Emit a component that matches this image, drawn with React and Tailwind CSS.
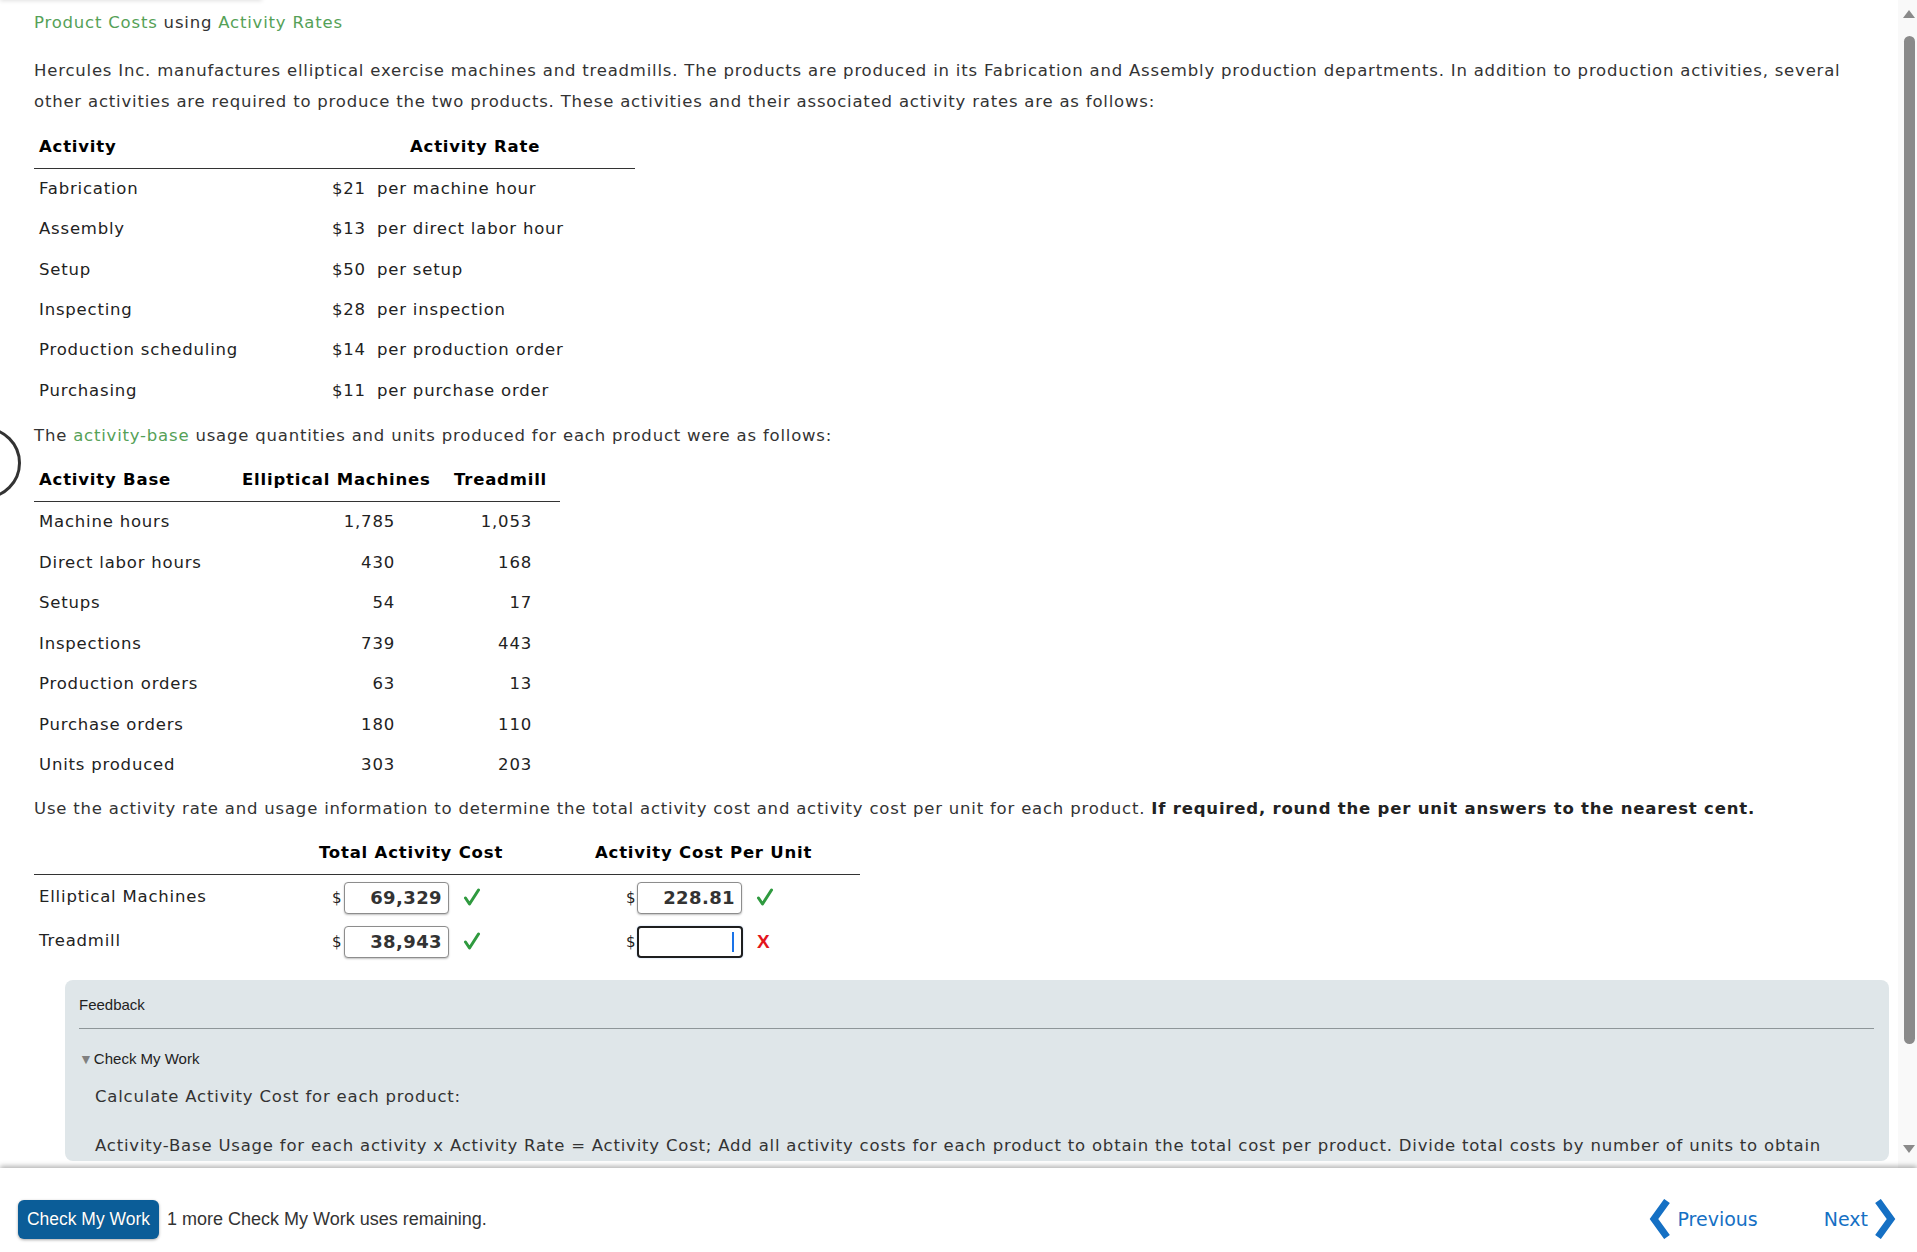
import React from "react";

const rates = [
  ["Fabrication", "$21", "per machine hour"],
  ["Assembly", "$13", "per direct labor hour"],
  ["Setup", "$50", "per setup"],
  ["Inspecting", "$28", "per inspection"],
  ["Production scheduling", "$14", "per production order"],
  ["Purchasing", "$11", "per purchase order"],
];

const usage = [
  ["Machine hours", "1,785", "1,053"],
  ["Direct labor hours", "430", "168"],
  ["Setups", "54", "17"],
  ["Inspections", "739", "443"],
  ["Production orders", "63", "13"],
  ["Purchase orders", "180", "110"],
  ["Units produced", "303", "203"],
];

function Check() {
  return (
    <svg width="18" height="19" viewBox="0 0 18 19" className="ml-[14px]">
      <path d="M2.5 10 L6.5 16 L15.5 2" fill="none" stroke="#2f9a3f" strokeWidth="3" strokeLinecap="round" strokeLinejoin="round" />
    </svg>
  );
}

function Cross() {
  return (
    <span className="ml-[14px] text-[19px] font-bold tracking-normal text-[#e4141c] [font-family:'Liberation_Sans',Arial,sans-serif]">X</span>
  );
}

function Filled({ value, dollar }) {
  return (
    <div className="flex items-center">
      <span className={`${dollar} text-[15px] tracking-normal text-[#222]`}>$</span>
      <div className="flex h-[32px] w-[105px] items-center justify-end rounded-[4px] border border-[#8d8d8d] bg-white pr-[6px] text-[18px] font-bold tracking-[0.4px] text-[#333] shadow-[0_1px_2px_rgba(0,0,0,0.25)]">
        {value}
      </div>
    </div>
  );
}

function Empty() {
  return (
    <div className="flex items-center">
      <span className="w-[11px] text-[15px] tracking-normal text-[#222]">$</span>
      <div className="flex h-[32px] w-[106px] items-center justify-end rounded-[4px] border-2 border-[#1e1e1e] bg-white pr-[7px] shadow-[0_0_2px_rgba(80,140,220,0.4)]">
        <div className="h-[20px] w-[2px] bg-[#1a73e8]" />
      </div>
    </div>
  );
}

export default function App() {
  return (
    <div className="flex h-[1252px] w-[1917px] flex-col overflow-hidden bg-white text-[16.5px] tracking-[0.8px] text-[#333] [font-family:'DejaVu_Sans',Verdana,sans-serif]">
      <div className="relative flex h-[1168px] min-h-0">
        {/* faint edge of an element above the viewport */}
        <div className="absolute left-0 top-[-6px] h-[6px] w-[262px] shadow-[0_1px_4px_rgba(0,0,0,0.12)]" />
        {/* circular control peeking from the left edge */}
        <div className="absolute left-[-51px] top-[427px] h-[72px] w-[72px] rounded-full border-[3px] border-[#333]" />

        <div className="min-w-0 flex-1 pl-[34px] pr-[9px]">
          <div className="flex h-[46px] items-center">
            <span className="text-[#55a157]">Product Costs</span>
            <span>&nbsp;using&nbsp;</span>
            <span className="text-[#55a157]">Activity Rates</span>
          </div>

          <p className="mt-[9px] pr-[10px] leading-[31px]">
            Hercules Inc. manufactures elliptical exercise machines and treadmills. The products are produced in its Fabrication and Assembly production departments. In addition to production activities, several other activities are required to produce the two products. These activities and their associated activity rates are as follows:
          </p>

          {/* activity rates */}
          <div className="mt-[10px] w-[601px] text-[#222]">
            <div className="flex h-[42px] items-center border-b border-[#333] font-bold text-black">
              <div className="w-[376px] pl-[5px]">Activity</div>
              <div>Activity Rate</div>
            </div>
            {rates.map(([a, r, d]) => (
              <div key={a} className="flex h-[40.4px] items-center">
                <div className="w-[298px] pl-[5px]">{a}</div>
                <div className="w-[45px]">{r}</div>
                <div>{d}</div>
              </div>
            ))}
          </div>

          <div className="mt-[10px] flex h-[30px] items-center">
            The&nbsp;<span className="text-[#55a157]">activity-base</span>&nbsp;usage quantities and units produced for each product were as follows:
          </div>

          {/* activity-base usage */}
          <div className="mt-[9px] w-[526px] text-[#222]">
            <div className="flex h-[42px] items-center border-b border-[#333] font-bold text-black">
              <div className="w-[208px] pl-[5px]">Activity Base</div>
              <div className="w-[212px]">Elliptical Machines</div>
              <div>Treadmill</div>
            </div>
            {usage.map(([a, e, t]) => (
              <div key={a} className="flex h-[40.5px] items-center">
                <div className="w-[200px] pl-[5px]">{a}</div>
                <div className="w-[161px] text-right">{e}</div>
                <div className="w-[137px] text-right">{t}</div>
              </div>
            ))}
          </div>

          <div className="mt-[9px] flex h-[30px] items-center">
            Use the activity rate and usage information to determine the total activity cost and activity cost per unit for each product.&nbsp;<b className="text-[#222]">If required, round the per unit answers to the nearest cent.</b>
          </div>

          {/* answers */}
          <div className="mt-[8px] w-[826px] text-[#222]">
            <div className="flex h-[42px] items-center border-b border-[#333] font-bold text-black">
              <div className="w-[285px]" />
              <div className="w-[276px]">Total Activity Cost</div>
              <div>Activity Cost Per Unit</div>
            </div>
            <div className="flex h-[44px] items-center pt-[2px]">
              <div className="w-[298px] pl-[5px]">Elliptical Machines</div>
              <div className="flex w-[294px] items-center">
                <Filled value="69,329" dollar="w-[12px]" />
                <Check />
              </div>
              <div className="flex items-center">
                <Filled value="228.81" dollar="w-[11px]" />
                <Check />
              </div>
            </div>
            <div className="flex h-[44px] items-center pt-[2px]">
              <div className="w-[298px] pl-[5px]">Treadmill</div>
              <div className="flex w-[294px] items-center">
                <Filled value="38,943" dollar="w-[12px]" />
                <Check />
              </div>
              <div className="flex items-center">
                <Empty />
                <Cross />
              </div>
            </div>
          </div>

          {/* feedback */}
          <div className="ml-[31px] mt-[17px] rounded-[8px] bg-[#dfe6e9] pl-[14px] pr-[15px]">
            <div className="flex h-[49px] items-center border-b border-[#8e9699] pt-[2px] text-[15px] tracking-normal text-[#222] [font-family:'Liberation_Sans',Arial,sans-serif]">
              Feedback
            </div>
            <div className="mt-[19px] flex items-center text-[15px] tracking-normal text-[#222] [font-family:'Liberation_Sans',Arial,sans-serif]">
              <span className="mr-[1px] text-[14px] leading-none text-[#808080]">▼</span>Check My Work
            </div>
            <div className="pl-[16px] pt-[12px]">
              <div className="flex h-[30px] items-center">Calculate Activity Cost for each product:</div>
              <div className="mt-[19px] flex h-[30px] items-center whitespace-nowrap">
                Activity-Base Usage for each activity x Activity Rate = Activity Cost; Add all activity costs for each product to obtain the total cost per product. Divide total costs by number of units to obtain
              </div>
            </div>
          </div>
        </div>

        {/* scrollbar */}
        <div className="flex w-[19px] shrink-0 flex-col items-center bg-[#f9f9f9] pl-[3px]">
          <svg width="14" height="10" viewBox="0 0 14 10" className="mt-[9px]">
            <path d="M7 1 L13 9 L1 9 Z" fill="#8a8a8a" />
          </svg>
          <div className="mt-[17px] h-[1008px] w-[11px] rounded-full bg-[#8a8a8a]" />
          <div className="flex-1" />
          <svg width="14" height="10" viewBox="0 0 14 10" className="mb-[14px]">
            <path d="M1 1 L13 1 L7 9 Z" fill="#8a8a8a" />
          </svg>
        </div>
      </div>

      {/* bottom bar */}
      <div className="relative z-10 flex h-[84px] shrink-0 items-center bg-white pl-[18px] pr-[21px] pt-[18px] tracking-normal shadow-[0_-2px_5px_rgba(0,0,0,0.3)] [font-family:'Liberation_Sans',Arial,sans-serif]">
        <button className="h-[39px] w-[141px] rounded-[6px] bg-[#0b5d98] text-[17.5px] text-white shadow-[0_1px_3px_rgba(0,0,0,0.35)] [text-shadow:0_0_1px_rgba(0,0,0,0.3)]">
          Check My Work
        </button>
        <span className="ml-[8px] text-[18px] text-[#333]">1 more Check My Work uses remaining.</span>
        <div className="flex-1" />
        <div className="flex items-center text-[19px] text-[#1570c4] [font-family:'DejaVu_Sans',Verdana,sans-serif]">
          <svg width="22" height="40" viewBox="0 0 22 40">
            <path d="M18 2 L5 20 L18 38" fill="none" stroke="#1570c4" strokeWidth="7" strokeLinejoin="miter" />
          </svg>
          <span className="ml-[6px]">Previous</span>
          <span className="ml-[66px]">Next</span>
          <svg width="22" height="40" viewBox="0 0 22 40" className="ml-[6px]">
            <path d="M4 2 L17 20 L4 38" fill="none" stroke="#1570c4" strokeWidth="7" strokeLinejoin="miter" />
          </svg>
        </div>
      </div>
    </div>
  );
}
